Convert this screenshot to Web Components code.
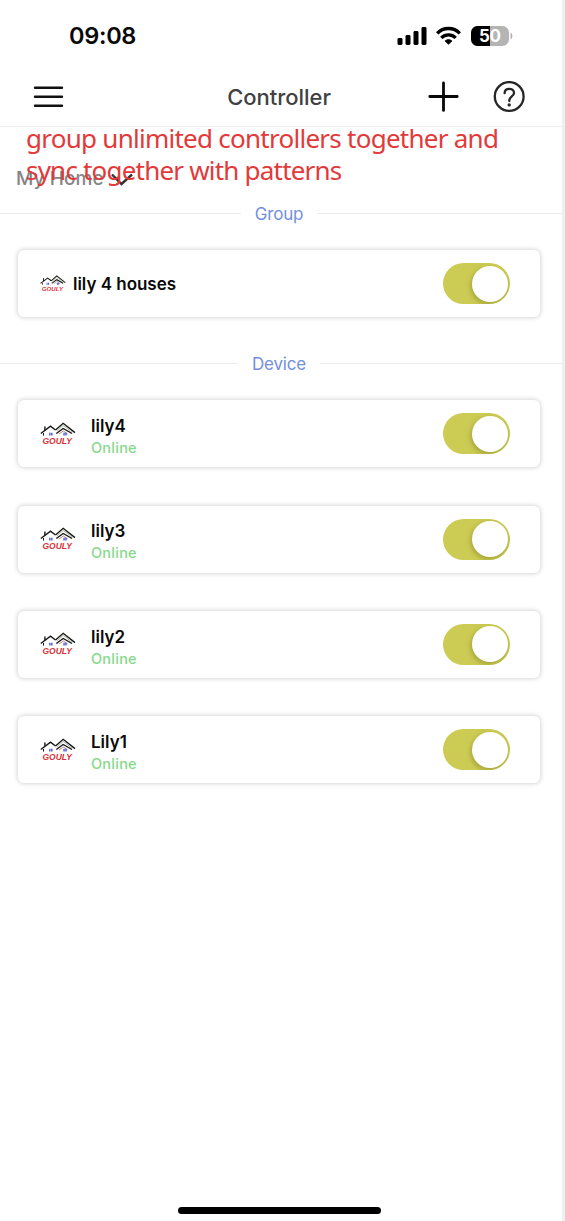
<!DOCTYPE html>
<html lang="en">
<head>
<meta charset="utf-8">
<title>Controller</title>
<style>
html,body{margin:0;height:100%;background:#fff}
body{font-family:Inter,"Liberation Sans",sans-serif;overflow:hidden}
</style>
</head>
<body>
<controller-app></controller-app>
<script>
const define = (name, html, setup) => {
  const tpl = document.createElement('template');
  tpl.innerHTML = html;
  customElements.define(name, class extends HTMLElement {
    constructor() {
      super();
      this.attachShadow({ mode: 'open' }).append(tpl.content.cloneNode(true));
    }
    connectedCallback() { if (setup) setup(this, this.shadowRoot); }
  });
};

define('status-bar', `
<style>
:host{display:flex;align-items:center;justify-content:space-between;height:70px;padding:1px 48px 0 69px;box-sizing:border-box}
time{font-size:23.5px;font-weight:600;line-height:28px;color:#0a0a0a;letter-spacing:-.3px;padding-top:1px}
.icons{display:flex;align-items:center}
svg{display:block}
.signal{margin-right:9px}.wifi{margin-right:10px}
</style>
<time>09:08</time>
<div class="icons">
<svg class="signal" width="30" height="20" viewBox="0 0 30 20"><g fill="#000"><rect x="0.5" y="12" width="5" height="7" rx="1.4"/><rect x="8.5" y="9" width="5" height="10" rx="1.4"/><rect x="16.5" y="5" width="5" height="14" rx="1.4"/><rect x="24.5" y="1" width="5" height="18" rx="1.4"/></g></svg>
<svg class="wifi" width="25" height="20" viewBox="0 0 25 20"><g fill="none" stroke="#000" stroke-width="3.3"><path d="M1.2 7.3C7.3 .9 17.7 .9 23.8 7.3"/><path d="M5.3 11.9C9.2 7.9 15.8 7.9 19.7 11.9"/></g><path d="M8.6 15C10.7 12.8 14.3 12.8 16.4 15L12.5 18.7Z"/></svg>
<svg width="43" height="22" viewBox="0 0 43 22"><defs><clipPath id="b"><rect x="0" y="1" width="38" height="20" rx="6.5"/></clipPath></defs><g clip-path="url(#b)"><path fill="#b4b4b4" d="M0 0h38v22H0z"/><path d="M0 0h19v22H0z"/></g><path fill="#b4b4b4" d="M39.5 7.5c2.5 1 2.5 6 0 7z"/><text x="19" y="17" text-anchor="middle" font-family="Inter,sans-serif" font-size="17" font-weight="700" fill="#fff" textLength="22">50</text></svg>
</div>`);

define('nav-bar', `
<style>
:host{display:grid;grid-template-columns:1fr auto 1fr;align-items:center;height:57px;box-sizing:border-box;padding:0 37px 2px 33px;border-bottom:1.5px solid #efefef}
h1{margin:-1px 0 0;font-size:22px;font-weight:500;line-height:28px;color:#414141;letter-spacing:-.03px}
svg{display:block}
.right{display:flex;justify-content:flex-end;align-items:center;gap:34px}
</style>
<svg width="31" height="24" viewBox="0 0 31 24"><path d="M2 2.7h27M2 11.7h27M2 20.7h27" stroke="#111" stroke-width="2.4" stroke-linecap="round"/></svg>
<h1><slot></slot></h1>
<div class="right">
<svg width="31" height="32" viewBox="0 0 31 32"><path d="M1.8 15.5h27.4M15.5 2v27.4" stroke="#080808" stroke-width="2.8" stroke-linecap="round"/></svg>
<svg width="32" height="32" viewBox="0 0 32 32"><circle cx="16.2" cy="15.5" r="14.4" fill="none" stroke="#262626" stroke-width="2.3"/><path d="M11.6 12.2c.1-2.8 2-4.3 4.7-4.3s4.7 1.6 4.7 4c0 3.3-4.7 3.9-4.7 7.6v.6" fill="none" stroke="#262626" stroke-width="2.3" stroke-linecap="round"/><circle cx="16.2" cy="23.9" r="1.7" fill="#262626"/></svg>
</div>`);

define('home-picker', `
<style>
:host{display:flex;align-items:flex-start;position:relative;height:73px;box-sizing:border-box;padding:40px 0 0 16px}
.name{font-size:19px;font-weight:500;line-height:24px;color:#858585;letter-spacing:.08px}
svg{display:block;margin:5px 0 0 6px}
.note{position:absolute;left:26px;top:-5px;margin:0;font:26px/32px "Noto Sans","Open Sans",sans-serif;color:#e23a3a;white-space:nowrap}
.l1{letter-spacing:-.74px}.l2{letter-spacing:-.8px}
</style>
<span class="name"><slot></slot></span>
<svg width="24" height="16" viewBox="0 0 24 16"><path d="M2 2.5l9.5 9.5L22 2.5" fill="none" stroke="#333" stroke-width="2.4"/></svg>
<p class="note"><span class="l1">group unlimited controllers together and</span><br><span class="l2">sync together with patterns</span></p>`);

define('section-divider', `
<style>
:host{display:flex;align-items:center;height:26px;gap:14px;margin-right:4px}
i{height:1px;flex:1;background:#ececec}
i:last-child{box-shadow:4px 0 #ececec}
span{font-size:17px;line-height:24px;color:#7390dc;letter-spacing:-.15px;padding-top:1px}
</style>
<i></i><span><slot></slot></span><i></i>`);

define('toggle-switch', `
<style>
:host{display:flex;justify-content:flex-end;box-sizing:border-box;width:67px;height:41px;padding:2.5px;border-radius:21px;background:#cccb53;overflow:hidden}
i{width:36px;height:36px;border-radius:50%;background:#fff;box-shadow:-1px 2px 5px rgba(80,80,0,.35)}
</style><i></i>`);

define('gouly-logo', `
<style>:host{display:block;width:36px;margin-top:-.5px}svg{display:block;width:100%;height:auto;overflow:visible}</style>
<svg viewBox="0 0 36 24"><g fill="none" stroke="#171717" stroke-width="1.4">
<path d="M.8 11.5L10.5 4.2 15.5 8"/><path d="M4.9 8.2V4.5"/><path d="M15.5 8L23.2 1.3 35 10.6M32 11.5l-8.8-5-6.9 5"/><path d="M3.5 11v2.6" stroke-width="1"/></g>
<path d="M17 8.8l6.3-5.4 9 7" fill="none" stroke="#527342" stroke-width=".5"/><path d="M19 12l4.4-3 4.3 3" fill="none" stroke="#893b40" stroke-width=".6"/>
<path d="M9.2 10.8h1.3v2.8H9.2zM11.2 10.8h1.3v2.8h-1.3zM23.4 10.8h1.3v2.8h-1.3zM25.3 10.8h1.3v2.8h-1.3z" fill="#394bd0"/>
<text x="2.5" y="22.2" font-family="Liberation Sans,Arial,sans-serif" font-size="8.3" font-weight="700" font-style="italic" fill="#d93035" textLength="29.5" lengthAdjust="spacingAndGlyphs">GOULY</text></svg>`);

define('device-card', `
<style>
:host{display:flex;align-items:center;box-sizing:border-box;height:67px;margin:0 22px 38.3px 18px;padding:0 30px 0 22px;background:#fff;border-radius:6px;box-shadow:0 0 4px 1px rgba(0,0,0,.16)}
.text{flex:1;margin-left:15px;padding-top:6.4px}
.name{font-size:17px;font-weight:600;line-height:22px;color:#090909}
.status{font-size:14.5px;font-weight:500;line-height:22px;color:#85d98a;letter-spacing:.25px}
:host([group]) gouly-logo{width:26px}
:host([group]) .text{margin-left:7px;padding:0}
:host([group]) .name{letter-spacing:-.02px}
</style>
<gouly-logo></gouly-logo>
<div class="text"><div class="name"><slot></slot></div></div>
<toggle-switch></toggle-switch>`, (el, root) => {
  const s = el.getAttribute('status');
  if (s) {
    const d = document.createElement('div');
    d.className = 'status';
    d.textContent = s;
    root.querySelector('.text').append(d);
  }
});

define('controller-app', `
<style>
:host{display:flex;flex-direction:column;box-sizing:border-box;height:1221px;width:565px;border-right:3px solid #f0f0f0;background:#fff}
.group{padding-top:24px}
.list{padding-top:23.7px;flex:1}
.second{margin-top:-4.6px}
.bar{align-self:center;width:203px;height:6.5px;border-radius:4px;background:#000;margin:0 4px 7.5px 0}
</style>
<status-bar></status-bar>
<nav-bar>Controller</nav-bar>
<home-picker>My Home</home-picker>
<section-divider>Group</section-divider>
<div class="group"><device-card group>lily 4 houses</device-card></div>
<section-divider class="second">Device</section-divider>
<div class="list">
<device-card status="Online">lily4</device-card>
<device-card status="Online">lily3</device-card>
<device-card status="Online">lily2</device-card>
<device-card status="Online">Lily1</device-card>
</div>
<div class="bar"></div>`);
</script>
</body>
</html>
